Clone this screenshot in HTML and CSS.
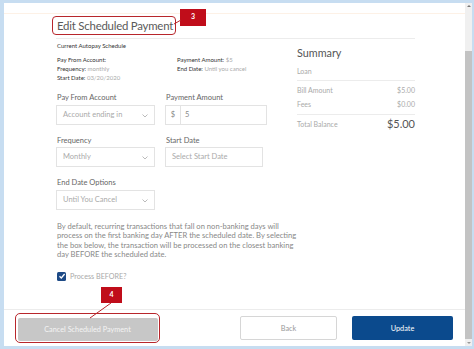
FILE: index.html
```html
<!DOCTYPE html>
<html>
<head>
<meta charset="utf-8">
<link rel="stylesheet" href="styles.css">
</head>
<body>
<div class="frame">
  <div class="page">
    <div class="topline"></div>
    <div class="header">
      <div class="title-box">Edit Scheduled Payment</div>
      <div class="callout callout-3">3</div>
      <svg class="leader leader-3" width="8" height="6" viewBox="0 0 8 6"><line x1="0" y1="5" x2="7" y2="1" stroke="#b8262b" stroke-width="1"/></svg>
    </div>
    <div class="rule"></div>
    <div class="main">
      <div class="left">
        <div class="current">Current Autopay Schedule</div>
        <div class="details">
          <div><b>Pay From Account:</b></div>
          <div><b>Payment Amount:</b> <span class="muted">$5</span></div>
          <div><b>Frequency:</b> <span class="muted">monthly</span></div>
          <div><b>End Date:</b> <span class="muted">Until you cancel</span></div>
          <div><b>Start Date:</b> <span class="muted">03/20/2020</span></div>
        </div>
        <div class="form-row first">
          <div class="field">
            <div class="label">Pay From Account</div>
            <div class="select">Account ending in
              <svg class="chev" width="6" height="4" viewBox="0 0 6 4"><polyline points="0.5,0.5 3,3 5.5,0.5" fill="none" stroke="#aaa" stroke-width="0.8"/></svg>
            </div>
          </div>
          <div class="field">
            <div class="label">Payment Amount</div>
            <div class="input-group"><span class="addon">$</span><span class="value">5</span></div>
          </div>
        </div>
        <div class="form-row">
          <div class="field">
            <div class="label">Frequency</div>
            <div class="select">Monthly
              <svg class="chev" width="6" height="4" viewBox="0 0 6 4"><polyline points="0.5,0.5 3,3 5.5,0.5" fill="none" stroke="#aaa" stroke-width="0.8"/></svg>
            </div>
          </div>
          <div class="field">
            <div class="label">Start Date</div>
            <div class="input">Select Start Date</div>
          </div>
        </div>
        <div class="form-row">
          <div class="field">
            <div class="label">End Date Options</div>
            <div class="select">Until You Cancel
              <svg class="chev" width="6" height="4" viewBox="0 0 6 4"><polyline points="0.5,0.5 3,3 5.5,0.5" fill="none" stroke="#aaa" stroke-width="0.8"/></svg>
            </div>
          </div>
        </div>
        <p class="note">By default, recurring transactions that fall on non-banking days will process on the first banking day AFTER the scheduled date. By selecting the box below, the transaction will be processed on the closest banking day BEFORE the scheduled date.</p>
        <div class="check-row">
          <span class="checkbox"><svg width="8" height="8" viewBox="0 0 8 8"><polyline points="1.5,4.2 3.3,6 6.6,2" fill="none" stroke="#fff" stroke-width="1.3"/></svg></span>
          <span class="check-label">Process BEFORE?</span>
          <div class="callout callout-4">4</div>
          <svg class="leader leader-4" width="24" height="16" viewBox="0 0 24 16"><line x1="22" y1="0" x2="1" y2="15" stroke="#b8262b" stroke-width="1"/></svg>
        </div>
      </div>
      <div class="summary">
        <div class="sum-title">Summary</div>
        <div class="sum-sub">Loan</div>
        <div class="sum-lines">
          <div class="sum-row"><span>Bill Amount</span><span>$5.00</span></div>
          <div class="sum-row"><span>Fees</span><span>$0.00</span></div>
        </div>
        <div class="sum-total"><span>Total Balance</span><span class="big">$5.00</span></div>
      </div>
    </div>
    <div class="footer">
      <div class="cancel-wrap"><button class="btn cancel">Cancel Scheduled Payment</button></div>
      <button class="btn back">Back</button>
      <button class="btn update">Update</button>
    </div>
  </div>
  <div class="scrollbar">
    <div class="arrow up"></div>
    <div class="track"><div class="thumb"></div></div>
    <div class="arrow down"></div>
  </div>
</div>
</body>
</html>
```
FILE: styles.css
```css
html, body {
  margin: 0;
  padding: 0;
}
body {
  font-family: Lato, "Open Sans", sans-serif;
  color: #555;
}
.frame {
  width: 474px;
  height: 349px;
  box-sizing: border-box;
  padding: 3px 2px 3px 4px;
  background: #c7ddf1;
  display: flex;
}
.page {
  flex: 1;
  background: #fff;
  display: flex;
  flex-direction: column;
  position: relative;
}
.topline {
  height: 1px;
  margin: 10px 0 0 0;
  background: #fdf1e6;
}
.header {
  position: relative;
  padding-left: 48px;
  height: 22px;
}
.title-box {
  display: inline-block;
  box-sizing: border-box;
  height: 19px;
  margin-top: 0;
  border: 1.5px solid #b8262b;
  border-radius: 4px;
  padding: 0 2px 0 4px;
  font-size: 11.4px;
  letter-spacing: -0.22px;
  line-height: 17px;
  color: #5a5a5a;
}
.callout {
  position: absolute;
  background: #c00d1a;
  color: #fff;
  font-weight: bold;
  font-size: 7px;
  text-align: center;
}
.callout-3 {
  left: 176px;
  top: -5px;
  width: 26px;
  height: 17px;
  line-height: 15px;
}
.leader {
  position: absolute;
}
.leader-3 {
  left: 170px;
  top: 5px;
}
.rule {
  height: 1px;
  background: #ececec;
  margin: 2px 50px 0 52px;
}
.main {
  flex: 1;
  display: flex;
  padding-left: 52px;
}
.left {
  width: 241px;
}
.current {
  margin-top: 2px;
  font-size: 6px;
  line-height: 9px;
  color: #333;
  padding-left: 1px;
}
.details {
  margin-top: 5px;
  display: grid;
  grid-template-columns: 120px 1fr;
  font-size: 6px;
  line-height: 9px;
  color: #333;
  padding-left: 1px;
}
.details b {
  font-weight: normal;
}
.muted {
  color: #aaa;
}
.form-row {
  display: flex;
  gap: 10px;
  margin-top: 11px;
}
.form-row.first {
  margin-top: 11px;
}
.field {
  width: 99px;
}
.label {
  font-size: 7.5px;
  line-height: 9px;
  color: #666;
  padding-left: 1px;
  margin-bottom: 2.5px;
}
.select, .input {
  box-sizing: border-box;
  height: 20px;
  border: 1px solid #e3e3e3;
  font-size: 7.5px;
  line-height: 18px;
  color: #aaa;
  padding-left: 6px;
  position: relative;
}
.input {
  width: 98px;
}
.chev {
  position: absolute;
  right: 6px;
  top: 8px;
}
.input-group {
  box-sizing: border-box;
  width: 102px;
  height: 20px;
  border: 1px solid #e3e3e3;
  display: flex;
  font-size: 7.5px;
  line-height: 18px;
  color: #888;
}
.addon {
  width: 14px;
  border-right: 1px solid #e3e3e3;
  text-align: center;
}
.value {
  padding-left: 4px;
}
.note {
  margin: 12px 0 0 0;
  width: 240px;
  font-size: 7.6px;
  line-height: 9.5px;
  color: #888;
  padding-left: 1px;
}
.check-row {
  position: relative;
  display: flex;
  align-items: center;
  gap: 4px;
  margin-top: 12px;
  padding-left: 1px;
}
.checkbox {
  width: 9px;
  height: 9px;
  border-radius: 1.5px;
  background: #1d4a86;
  display: flex;
  align-items: center;
  justify-content: center;
}
.check-label {
  font-size: 7.2px;
  color: #a9a9a9;
}
.callout-4 {
  left: 45px;
  top: 15px;
  width: 21px;
  height: 16px;
  line-height: 15px;
}
.leader-4 {
  left: 33px;
  top: 31px;
}
.summary {
  width: 118px;
  margin-left: auto;
  margin-right: 50px;
}
.sum-title {
  margin-top: 6px;
  font-size: 10.8px;
  line-height: 16px;
  color: #555;
}
.sum-sub {
  margin-top: 6px;
  font-size: 7px;
  line-height: 9px;
  color: #aaa;
  padding-bottom: 4px;
  border-bottom: 1px solid #ececec;
}
.sum-lines {
  padding: 5px 0 5px;
  border-bottom: 1px solid #ececec;
}
.sum-row, .sum-total {
  display: flex;
  justify-content: space-between;
  font-size: 7px;
  line-height: 9px;
  color: #aaa;
}
.sum-row + .sum-row {
  margin-top: 5px;
}
.sum-total {
  align-items: center;
  margin-top: 2px;
  line-height: 14px;
}
.big {
  font-size: 11px;
  color: #555;
}
.footer {
  border-top: 1px solid #ececec;
  display: flex;
  align-items: center;
  height: 37px;
  padding: 0 12px 0 11px;
  box-sizing: border-box;
}
.btn {
  font-family: Lato, "Open Sans", sans-serif;
  font-size: 7.3px;
  height: 24px;
  box-sizing: border-box;
  border-radius: 2px;
  cursor: pointer;
}
.cancel-wrap {
  border: 1.5px solid #b8262b;
  border-radius: 5px;
  padding: 1.5px;
}
.cancel {
  width: 140px;
  height: 23px;
  background: #c7c7c7;
  border: none;
  color: #f4f4f4;
}
.back {
  margin-left: auto;
  width: 97px;
  background: #fff;
  border: 1px solid #d6d6d6;
  color: #999;
}
.update {
  margin-left: 15px;
  width: 101px;
  background: #0b4a8d;
  border: none;
  color: #fff;
}
.scrollbar {
  width: 7px;
  background: #f0f0f0;
  display: flex;
  flex-direction: column;
}
.arrow {
  height: 6px;
  display: flex;
  align-items: center;
  justify-content: center;
}
.arrow.up::before {
  content: "";
  border-left: 2px solid transparent;
  border-right: 2px solid transparent;
  border-bottom: 2px solid #777;
}
.arrow.down::before {
  content: "";
  border-left: 2px solid transparent;
  border-right: 2px solid transparent;
  border-top: 2px solid #999;
}
.track {
  flex: 1;
  padding-top: 42px;
}
.thumb {
  height: 288px;
  background: #c3c3c3;
}
```
